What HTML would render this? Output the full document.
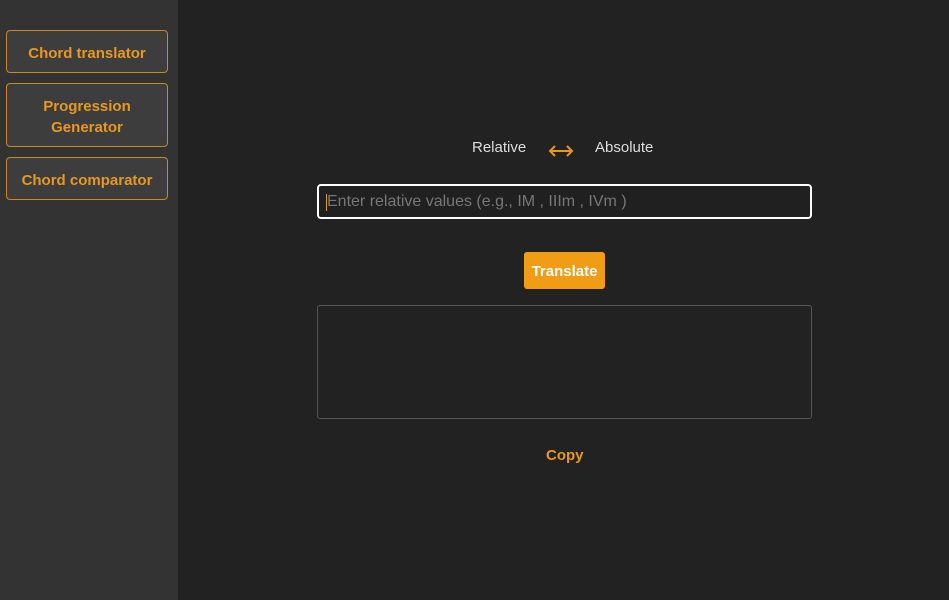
<!DOCTYPE html>
<html><head><style>
body{margin:0;width:949px;height:600px;background:#222;font-family:"Liberation Sans",sans-serif;position:relative;overflow:hidden}
.side{position:absolute;left:0;top:0;width:178px;height:600px;background:#333}
.btn{position:absolute;left:6px;width:162px;border:1px solid #c8891f;border-radius:4px;background:#3d3d3d;color:#e8981e;font-weight:bold;font-size:15px;text-align:center;display:flex;align-items:center;justify-content:center;line-height:21px;padding-top:3px;box-sizing:border-box}
.lbl{position:absolute;top:139px;color:#ddd;font-size:15px}
.inp{position:absolute;left:317px;top:184px;border:2px solid #fff;border-radius:4px;width:491px;height:31px;background:#202020}
.ph{position:absolute;left:8px;top:7px;color:#777;font-size:16px}
.cur{position:absolute;left:7px;top:8px;width:1px;height:17px;background:#e8981e}
.tr{position:absolute;left:524px;top:252px;width:81px;height:37px;background:#f09c14;border-radius:3px;color:#fff;font-weight:bold;font-size:15px;text-align:center;line-height:39px}
.out{position:absolute;left:317px;top:305px;width:493px;height:112px;border:1px solid #555;border-radius:3px}
.copy{position:absolute;left:546px;top:447px;color:#e8981e;font-weight:bold;font-size:15px}
</style></head><body>
<div class="side">
<div class="btn" style="top:30px;height:43px">Chord translator</div>
<div class="btn" style="top:83px;height:64px">Progression<br>Generator</div>
<div class="btn" style="top:157px;height:43px">Chord comparator</div>
</div>
<div class="lbl" style="left:472px">Relative</div>
<svg style="position:absolute;left:548px;top:144px" width="26" height="14" viewBox="0 0 26 14"><path d="M2 7H24M7 2L2 7L7 12M19 2L24 7L19 12" stroke="#e8981e" stroke-width="2" fill="none"/></svg>
<div class="lbl" style="left:595px">Absolute</div>
<div class="inp"><div class="cur"></div><div class="ph">Enter relative values (e.g., IM , IIIm , IVm )</div></div>
<div class="tr">Translate</div>
<div class="out"></div>
<div class="copy">Copy</div>
</body></html>
